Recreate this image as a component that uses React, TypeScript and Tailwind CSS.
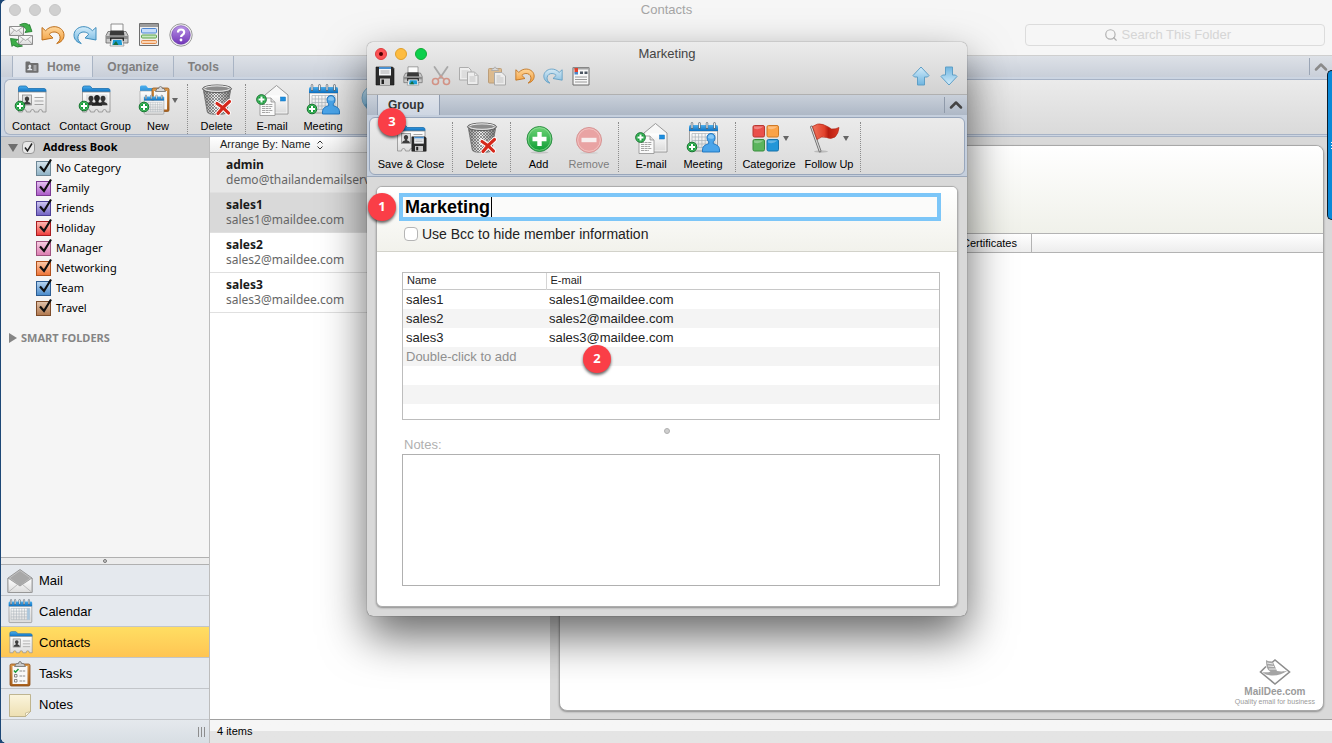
import type { ReactNode } from 'react';
import { ChevronUp, Search } from 'lucide-react';
import clsx from 'clsx';

const categories = [
  { name: 'No Category', box: 'border-[#6d8796] from-[#d5e4ec] to-[#8fb3c6]' },
  { name: 'Family', box: 'border-[#7c3a94] from-[#e4c0ef] to-[#ac5cc8]' },
  { name: 'Friends', box: 'border-[#4d3f96] from-[#cdc5ee] to-[#7565c4]' },
  { name: 'Holiday', box: 'border-[#a81c20] from-[#fbb5b0] to-[#ee3b3d]' },
  { name: 'Manager', box: 'border-[#a0547f] from-[#f6cde2] to-[#dc7fb2]' },
  { name: 'Networking', box: 'border-[#b0501c] from-[#fbc8a5] to-[#ee7536]' },
  { name: 'Team', box: 'border-[#2c5c92] from-[#b5d3ef] to-[#4a8ccb]' },
  { name: 'Travel', box: 'border-[#7d4c2a] from-[#dfc1a8] to-[#b27a50]' },
];

const contacts = [
  { name: 'admin', email: 'demo@thailandemailserver.com', row: 'bg-[#e7e7e7]' },
  { name: 'sales1', email: 'sales1@maildee.com', row: 'bg-[#d9d9d9]' },
  { name: 'sales2', email: 'sales2@maildee.com', row: 'bg-white' },
  { name: 'sales3', email: 'sales3@maildee.com', row: 'bg-white' },
];

const members = contacts.slice(1);

/* ---------- icons ---------- */

function Defs() {
  return (
    <svg className="absolute h-0 w-0" aria-hidden="true">
      <defs>
        <linearGradient id="blue" x1="0" y1="0" x2="0" y2="1">
          <stop offset="0" stopColor="#4db0ee" />
          <stop offset="1" stopColor="#0b6fc0" />
        </linearGradient>
        <linearGradient id="sky" x1="0" y1="0" x2="0" y2="1">
          <stop offset="0" stopColor="#d3ecfa" />
          <stop offset="1" stopColor="#6fb5e0" />
        </linearGradient>
        <linearGradient id="paper" x1="0" y1="0" x2="0" y2="1">
          <stop offset="0" stopColor="#ffffff" />
          <stop offset="1" stopColor="#dcdcdc" />
        </linearGradient>
        <linearGradient id="steel" x1="0" y1="0" x2="1" y2="0">
          <stop offset="0" stopColor="#8a8a8a" />
          <stop offset="0.45" stopColor="#f4f4f4" />
          <stop offset="1" stopColor="#7c7c7c" />
        </linearGradient>
        <linearGradient id="green" x1="0" y1="0" x2="0" y2="1">
          <stop offset="0" stopColor="#6fd477" />
          <stop offset="1" stopColor="#0c9c33" />
        </linearGradient>
        <linearGradient id="red" x1="0" y1="0" x2="1" y2="0">
          <stop offset="0" stopColor="#f0755e" />
          <stop offset="0.45" stopColor="#e2412b" />
          <stop offset="0.6" stopColor="#b81d10" />
          <stop offset="1" stopColor="#dc3823" />
        </linearGradient>
        <linearGradient id="orange" x1="0" y1="0" x2="0" y2="1">
          <stop offset="0" stopColor="#ffd79c" />
          <stop offset="1" stopColor="#f19a35" />
        </linearGradient>
        <linearGradient id="wood" x1="0" y1="0" x2="0" y2="1">
          <stop offset="0" stopColor="#dc9a4c" />
          <stop offset="1" stopColor="#a85f1c" />
        </linearGradient>
        <linearGradient id="purple" x1="0" y1="0" x2="0" y2="1">
          <stop offset="0" stopColor="#b994e6" />
          <stop offset="1" stopColor="#7235b8" />
        </linearGradient>
        <linearGradient id="note" x1="0" y1="0" x2="0" y2="1">
          <stop offset="0" stopColor="#fbf5dd" />
          <stop offset="1" stopColor="#eddfb2" />
        </linearGradient>
        <pattern id="mesh" width="3" height="3" patternUnits="userSpaceOnUse">
          <path d="M0 0l3 3M3 0l-3 3" stroke="#555" strokeWidth="0.6" />
        </pattern>
      </defs>
    </svg>
  );
}

function Svg({ box = 32, className = 'size-8', children }: { box?: number; className?: string; children: ReactNode }) {
  return (
    <svg viewBox={`0 0 ${box} ${box}`} className={clsx('shrink-0 overflow-visible', className)} fill="none" aria-hidden="true">
      {children}
    </svg>
  );
}

function PlusBadge({ x, y }: { x: number; y: number }) {
  return (
    <g>
      <circle cx={x} cy={y} r="4.8" fill="#129a38" stroke="#0a6a24" />
      <circle cx={x} cy={y} r="4" stroke="#6bcf7f" strokeWidth="0.6" />
      <path d={`M${x - 3} ${y}h6M${x} ${y - 3}v6`} stroke="#fff" strokeWidth="2" />
    </g>
  );
}

function Bust({ x, y, s = 1, fill = '#3c3c3c' }: { x: number; y: number; s?: number; fill?: string }) {
  return (
    <path
      transform={`translate(${x} ${y}) scale(${s})`}
      d="M0-5c1.500 0 2.400 1.100 2.400 2.600 0 1-.5 1.900-1.100 2.400v1c1.500.5 3 .8 3 3H-4.300c0-2.200 1.500-2.500 3-3V0C-1.900-.5-2.400-1.400-2.400-2.400-2.400-3.900-1.500-5 0-5z"
      fill={fill}
    />
  );
}

function CardBody() {
  return (
    <g>
      <path d="M3.500 8V4Q3.500 2 5.500 2h5q1 0 1.600 1l1 1.500H29q2 0 2 2V8z" fill="url(#blue)" stroke="#1b6fae" strokeWidth="0.8" />
      <path d="M3.500 8h27.500v20h-3.500q0-2.500-2-2.500t-2 2.500h-4q0-2.500-2-2.500t-2 2.500h-4q0-2.500-2-2.500t-2 2.500H3.500z" fill="url(#paper)" stroke="#8e8e8e" strokeWidth="0.8" />
    </g>
  );
}

function ContactIcon({ badge = true, className }: { badge?: boolean; className?: string }) {
  return (
    <Svg className={className}>
      <CardBody />
      <rect x="7.500" y="11" width="9" height="10" fill="#dedede" stroke="#8a8a8a" strokeWidth="0.8" />
      <Bust x={12} y={17} s={0.9} />
      <path d="M19.500 13.500h9M19.500 17h9M19.500 20.500h9" stroke="#a5a5a5" />
      {badge && <PlusBadge x={5} y={22} />}
    </Svg>
  );
}

function GroupIcon() {
  return (
    <Svg>
      <CardBody />
      <rect x="7" y="10.500" width="21.500" height="11.500" fill="#e2e2e2" />
      <Bust x={12} y={17} s={1.050} fill="#333" />
      <Bust x={24} y={17} s={1.050} fill="#333" />
      <Bust x={18} y={17} s={1.200} fill="#222" />
      <PlusBadge x={5} y={22} />
    </Svg>
  );
}

function CalendarArt({ rings = [5, 12.500, 20, 27.500] }: { rings?: number[] }) {
  return (
    <g>
      <path d="M2.500 9h28v19q0 1-1 1h-26q-1 0-1-1z" fill="url(#paper)" stroke="#8a8a8a" strokeWidth="0.8" />
      <path d="M2 4.500Q2 3 3.500 3h26Q31 3 31 4.500V9H2z" fill="url(#blue)" />
      <path d="M5 11.500h23v14H5zM5 15h23M5 18.500h23M5 22h23M8.300 11.500v14M11.600 11.500v14M14.900 11.500v14M18.200 11.500v14M21.500 11.500v14M24.800 11.500v14" stroke="#a9b1b8" strokeWidth="0.7" />
      {rings.map((x) => (
        <g key={x}>
          <path d={`M${x} 1.500v4.500`} stroke="#5f6b75" strokeWidth="2.400" strokeLinecap="round" />
          <path d={`M${x} 1.500v4`} stroke="#eef3f7" strokeWidth="1.100" strokeLinecap="round" />
        </g>
      ))}
    </g>
  );
}

function NewIcon() {
  return (
    <Svg>
      <path d="M1 5V3q0-1.500 1.500-1.500H7L9 4h7v10H1z" fill="url(#blue)" />
      <path d="M1 7h15v14H1z" fill="url(#paper)" stroke="#999" strokeWidth="0.6" />
      <rect x="13" y="4" width="17" height="23.500" rx="1.500" fill="url(#wood)" stroke="#93571c" strokeWidth="0.8" />
      <rect x="15" y="7" width="13" height="18.500" fill="#f6f6f6" />
      <path d="M16.500 7.500l1.500-3h1.600q.4-2 1.900-2t1.900 2H25l1.500 3z" fill="#d8d8d8" stroke="#6c6c6c" strokeWidth="0.8" />
      <g transform="translate(3.500 10.500) scale(.7 .68)">
        <CalendarArt />
      </g>
      <PlusBadge x={5} y={23} />
    </Svg>
  );
}

function TrashIcon() {
  return (
    <Svg>
      <path d="M2 5l4 23.500Q7 31 16 31t10-2.500L30 5z" fill="url(#steel)" />
      <path d="M2.500 7l3.800 21q1 2.500 9.700 2.500t9.700-2.500L29.500 7z" fill="url(#mesh)" stroke="#6b6b6b" strokeWidth="0.6" />
      <ellipse cx="16" cy="4.800" rx="14.500" ry="3.800" fill="#a5a5a5" stroke="#5e5e5e" strokeWidth="1" />
      <ellipse cx="16" cy="4.600" rx="13" ry="2.700" fill="#8c8c8c" stroke="#ededed" strokeWidth="1" />
      <path d="M16 19.500q6.500 4 11.500 9.500M28.500 17.500q-6 5-11.500 12" stroke="#fff" strokeWidth="5" strokeLinecap="round" />
      <path d="M16 19.500q6.500 4 11.500 9.500M28.500 17.500q-6 5-11.500 12" stroke="#d5281b" strokeWidth="3.200" strokeLinecap="round" />
    </Svg>
  );
}

function EmailIcon() {
  return (
    <Svg>
      <path d="M9 11L20.500 1.500 32 11v19H9z" fill="#f7f7f7" stroke="#8e8e8e" strokeWidth="0.9" />
      <path d="M11 11.500h19.500v17H11z" fill="url(#paper)" />
      <rect x="24.500" y="13" width="5" height="4" fill="#1e8fe0" stroke="#1372bb" strokeWidth="0.5" />
      <path d="M4 14h11l4 4v13.500H4z" fill="#fafafa" stroke="#8f8f8f" strokeWidth="0.8" />
      <path d="M15 14v4h4" fill="#ddd" stroke="#8f8f8f" strokeWidth="0.8" />
      <path d="M6 20.500h11M6 22.500h11M6 24.500h9M6 26.500h11M6 28.500h8" stroke="#9b9b9b" strokeWidth="0.9" strokeDasharray="3 .6" />
      <PlusBadge x={5.500} y={15.500} />
    </Svg>
  );
}

function MeetingIcon() {
  return (
    <Svg>
      <CalendarArt />
      <path d="M24 11.500c2.600 0 4 1.800 4 4.300 0 1.700-.7 3.200-1.700 4v1.800c2.800 1.200 6.200 1.900 6.200 6.400V30H15.500v-2c0-4.500 3.400-5.200 6.200-6.400v-1.800c-1-.8-1.700-2.300-1.700-4 0-2.500 1.400-4.300 4-4.300z" fill="#4ba5ea" stroke="#1a72bd" strokeWidth="0.9" />
      <path d="M24 12.500c1.800 0 3 1.200 3 3.300 0 .6-3 1.700-6 .3 0-2.300 1.200-3.600 3-3.600z" fill="#86c8f6" />
      <PlusBadge x={5} y={25} />
    </Svg>
  );
}

function ShareIcon() {
  return (
    <Svg>
      <circle cx="16" cy="14" r="12" fill="url(#sky)" stroke="#7fb3d2" />
      <path d="M8 20q4 8 14 8" stroke="#6faad0" strokeWidth="4" />
    </Svg>
  );
}

function FloppyArt() {
  return (
    <g>
      <path d="M1 1h16.500L19 2.500V19H1z" fill="#2b2b2b" stroke="#111" strokeWidth="0.6" />
      <path d="M4 1h12v8.500H4z" fill="#f4f6f8" />
      <path d="M4 1h12v2H4z" fill="#4a90d0" />
      <path d="M5.500 5h9M5.500 7h9" stroke="#9a9a9a" strokeWidth="0.8" />
      <path d="M5 12.500h10V19H5z" fill="#c9c9c9" />
      <path d="M6.500 13.500h2.500v4.500H6.500z" fill="#222" />
    </g>
  );
}

function SaveCloseIcon() {
  return (
    <Svg>
      <g transform="translate(-1 1)">
        <CardBody />
        <rect x="7.500" y="10.500" width="9" height="10" fill="#dedede" stroke="#8a8a8a" strokeWidth="0.8" />
        <Bust x={12} y={16.500} s={0.9} />
        <path d="M19.500 11.500h9" stroke="#a5a5a5" />
      </g>
      <g transform="translate(16 14) scale(.8)">
        <FloppyArt />
      </g>
    </Svg>
  );
}

function AddIcon() {
  return (
    <Svg>
      <ellipse cx="16.500" cy="30.500" rx="9" ry="1.200" fill="#c4c4c4" />
      <circle cx="16.500" cy="17" r="12.500" fill="url(#green)" stroke="#2e8f45" />
      <circle cx="16.500" cy="17" r="11.300" stroke="#a4e2a9" strokeOpacity="0.6" />
      <path d="M16.500 10v14M9.500 17h14" stroke="#fff" strokeWidth="4.400" />
    </Svg>
  );
}

function RemoveIcon() {
  return (
    <Svg>
      <ellipse cx="16" cy="31" rx="9" ry="1" fill="#d2d2d2" />
      <circle cx="16" cy="18" r="12.500" fill="#e9a3a3" stroke="#d69494" />
      <circle cx="16" cy="18" r="11.300" stroke="#f3c2c0" />
      <path d="M8.500 18h15" stroke="#f7eeee" strokeWidth="4.400" />
    </Svg>
  );
}

function CategorizeIcon() {
  return (
    <Svg>
      <rect x="3" y="3.500" width="11.500" height="11.500" rx="1.500" fill="#ea504b" stroke="#b83833" />
      <rect x="17" y="3.500" width="11.500" height="11.500" rx="1.500" fill="#fba348" stroke="#cf7a26" />
      <rect x="3" y="17.500" width="11.500" height="11.500" rx="1.500" fill="#5bb55d" stroke="#3a8c3c" />
      <rect x="17" y="17.500" width="11.500" height="11.500" rx="1.500" fill="#2196d8" stroke="#1672aa" />
      <path d="M4 6.500q5 2 9.500-2H4zM18 6.500q5 2 9.500-2H18zM4 20.500q5 2 9.500-2H4zM18 20.500q5 2 9.500-2H18z" fill="#fff" fillOpacity="0.3" />
    </Svg>
  );
}

function FlagIcon() {
  return (
    <Svg>
      <ellipse cx="11" cy="29.500" rx="7" ry="1.200" fill="#bbb" />
      <path d="M1.500 5l8.500 24" stroke="#6c6c6c" strokeWidth="2.800" strokeLinecap="round" />
      <path d="M1.500 5l8.500 24" stroke="#d9d9d9" strokeWidth="1.100" strokeLinecap="round" />
      <path d="M2.500 4.500Q8 .5 13 2.500t8.500 4.500q3.500.5 7.500-1.500-.5 6-4 9.500-4 2.500-8.500.5-5-2-9.500 2z" fill="url(#red)" stroke="#b02a1a" strokeWidth="0.7" />
    </Svg>
  );
}

function FloppyIcon() {
  return (
    <Svg box={20} className="size-5">
      <FloppyArt />
    </Svg>
  );
}

function PrinterIcon({ className }: { className: string }) {
  return (
    <Svg box={24} className={className}>
      <path d="M6 1h12v9H6z" fill="#fbfbfb" stroke="#777" strokeWidth="0.8" />
      <path d="M3 8.500h3V11h12V8.500h3l2 4V20H1v-7.500z" fill="#c9c9c9" stroke="#666" strokeWidth="0.8" />
      <path d="M5.500 7.500h13l1 5h-15z" fill="#3a3a3a" />
      <path d="M1 13h22v3H1z" fill="#8d8d8d" />
      <path d="M5 14.500h14V18H5z" fill="#222" />
      <path d="M6.500 16h11l1.500 7H5z" fill="#f4f4f4" stroke="#777" strokeWidth="0.6" />
      <path d="M8 17h8.500l.7 5H7.300z" fill="#1b9bd4" />
      <path d="M8 22l3-4 2.500 4z" fill="#17703d" />
    </Svg>
  );
}

function UndoIcon({ flip = false, className }: { flip?: boolean; className: string }) {
  return (
    <Svg box={24} className={className}>
      <path
        transform={flip ? 'matrix(-1 0 0 1 24 0)' : undefined}
        d="M1 4.500l3.600 3.200C7.500 4.400 11 3.500 14.200 3.700c5.200.4 8.800 4 8.800 8.500 0 4-2.800 7.300-7.300 8.300 2.600-1.900 3.800-4.300 3.300-7-.6-3.200-3.300-4.700-6-4.500-2 .1-3.600.9-4.800 2.300l3.800 3.700L1 17z"
        fill={flip ? 'url(#sky)' : 'url(#orange)'}
        stroke={flip ? '#3e8dbd' : '#bd6f1c'}
      />
    </Svg>
  );
}

function SendReceiveIcon() {
  return (
    <Svg box={24} className="size-6">
      <path d="M.5 3.500h14v9H.5z" fill="url(#paper)" stroke="#8d8d8d" />
      <path d="M.5 3.500l7 5 7-5M.5 12.500l5-5.500M14.500 12.500l-5-5.500" stroke="#9c9c9c" strokeWidth="0.8" />
      <path d="M9.500 12.500h14v9h-14z" fill="url(#paper)" stroke="#8d8d8d" />
      <path d="M9.500 12.500l7 5 7-5M9.500 21.500l5-5.500M23.500 21.500l-5-5.500" stroke="#9c9c9c" strokeWidth="0.8" />
      <path d="M10.500 2Q16-1.500 20.500 2.500V1.500L23 8.500 16 9.500l1.500-2.500Q15.500 2.500 10.500 2z" fill="#3eae49" stroke="#1e7a2b" strokeWidth="0.8" />
      <path d="M13.500 23q-5.500 2.500-9.500-1l-1 1.500-1.500-8 7.500 1-2 2q2 4 6.500 4.500z" fill="#3eae49" stroke="#1e7a2b" strokeWidth="0.8" />
    </Svg>
  );
}

function ListViewIcon() {
  return (
    <Svg box={24} className="size-6">
      <path d="M2.500.5h19v22h-19z" fill="#efefef" stroke="#6e6e6e" />
      <path d="M3 1h18v3H3z" fill="#9c9c9c" />
      <rect x="4.500" y="5.500" width="15" height="4.500" rx="1" fill="#c6ddfa" stroke="#4d86d2" />
      <rect x="4.500" y="12" width="15" height="3" rx="1" fill="#c9e8c0" stroke="#5aa34a" />
      <rect x="4.500" y="17.500" width="15" height="3" rx="1" fill="#fbd3b2" stroke="#e08a4a" />
    </Svg>
  );
}

function HelpIcon() {
  return (
    <Svg box={24} className="size-6">
      <circle cx="12" cy="12" r="11.200" fill="#f4f4f4" stroke="#9a9a9a" />
      <circle cx="12" cy="12" r="9.300" fill="url(#purple)" stroke="#6a3aa6" strokeWidth="0.6" />
      <path d="M9 9.500q0-3 3.100-3t3.100 2.700q0 1.500-1.600 2.500t-1.500 2.300" stroke="#fff" strokeWidth="2.200" />
      <circle cx="12" cy="17" r="1.400" fill="#fff" />
    </Svg>
  );
}

function CutIcon() {
  return (
    <Svg box={20} className="size-5 opacity-60">
      <path d="M3.500 1l7.500 11M16.500 1L9 12" stroke="#858585" strokeWidth="1.800" strokeLinecap="round" />
      <circle cx="4.500" cy="15.500" r="3" stroke="#d0654f" strokeWidth="1.600" />
      <circle cx="15.500" cy="15.500" r="3" stroke="#d0654f" strokeWidth="1.600" />
      <path d="M7 13.500l3-3.500 3 3.500" stroke="#c9705d" strokeWidth="1.600" />
    </Svg>
  );
}

function CopyIcon() {
  return (
    <Svg box={20} className="size-5 opacity-60">
      <path d="M.5 1.500h9L12 4v10H.5z" fill="#fafafa" stroke="#8c8c8c" />
      <path d="M2.500 5h7M2.500 7h7M2.500 9h7M2.500 11h7" stroke="#b5b5b5" strokeWidth="0.8" />
      <path d="M8.500 6h7l3.500 3.500V18.500H8.500z" fill="#fafafa" stroke="#8c8c8c" />
      <path d="M15.500 6v3.500H19M10.500 11h6M10.500 13h6M10.500 15h6" stroke="#a5a5a5" strokeWidth="0.8" />
    </Svg>
  );
}

function PasteIcon() {
  return (
    <Svg box={20} className="size-5 opacity-60">
      <rect x="1.500" y="2.500" width="13" height="14.500" rx="1" fill="#dca55c" stroke="#a8763a" />
      <path d="M4.500 4.500l1-2H7q0-1.500 1-1.500t1 1.500h1.500l1 2z" fill="#d9d9d9" stroke="#808080" strokeWidth="0.8" />
      <path d="M7.500 6.500h7.500l3.500 3.500v9h-11z" fill="#fafafa" stroke="#8c8c8c" />
      <path d="M9.500 10h4M9.500 12h7M9.500 14h7M9.500 16h7" stroke="#a5a5a5" strokeWidth="0.8" />
    </Svg>
  );
}

function FormIcon() {
  return (
    <Svg box={20} className="size-5">
      <path d="M2 1.500h16v17.500H2z" fill="#f7f7f7" stroke="#6b6b6b" />
      <path d="M2 1.500h16v2H2z" fill="#a5a5a5" />
      <path d="M3.500 2h3.500v4.500H3.500z" fill="#e2402d" />
      <path d="M3.500 6h3.500v2.500H3.500z" fill="#4b87c9" />
      <path d="M9 5.500h3v2.500H9zM13.500 5.500h3v2.500h-3z" fill="#4c5662" />
      <path d="M4 11h12M4 13.500h12M4 16h12" stroke="#9a9a9a" />
    </Svg>
  );
}

function ArrowIcon({ down = false }: { down?: boolean }) {
  return (
    <Svg box={20} className={clsx('size-5', down && 'rotate-180')}>
      <path d="M10 1l8 8.500-1.500 1.500H13.500v8h-7v-8H3.500L2 9.500z" fill="url(#sky)" stroke="#5f9fc6" />
    </Svg>
  );
}

function MailNavIcon() {
  return (
    <Svg box={26} className="size-[26px]">
      <path d="M1 10L13 1.500 25 10v14.500H1z" fill="#c4c4c4" stroke="#888" strokeWidth="0.8" />
      <path d="M3 10L13 3l10 7-10 7.500z" fill="#a8a8a8" />
      <path d="M1 10l12 8 12-8v14.500H1z" fill="url(#paper)" stroke="#8e8e8e" strokeWidth="0.8" />
      <path d="M1.500 24l9-7.500M24.500 24l-9-7.500" stroke="#b0b0b0" strokeWidth="0.8" />
    </Svg>
  );
}

function CalendarNavIcon() {
  return (
    <Svg className="size-[26px]">
      <CalendarArt rings={[5, 10, 15.500, 21, 27]} />
      <path d="M24.800 11.500H28v14h-3.200z" fill="#a9c6dd" />
    </Svg>
  );
}

function TasksNavIcon() {
  return (
    <Svg box={26} className="size-[26px]">
      <rect x="3" y="3" width="20" height="22" rx="1.500" fill="url(#wood)" stroke="#8a4d17" strokeWidth="0.8" />
      <path d="M5.500 5h15v18h-15z" fill="#f8f8f8" />
      <path d="M7.500 5.500l2-3h2q0-2 1.500-2t1.500 2h2l2 3z" fill="#c8c8c8" stroke="#6d6d6d" strokeWidth="0.8" />
      <path d="M7 9.500l1.500 1.700L11.500 8" stroke="#1d9a3c" strokeWidth="1.500" />
      <path d="M7.500 13.500h2.500v2.500H7.500zM7.500 18.500h2.500V21H7.500z" stroke="#6d6d6d" strokeWidth="0.8" />
      <path d="M12.500 10h6M12.500 15h6M12.500 20h6" stroke="#8c8c8c" strokeDasharray="2.500 .7" />
    </Svg>
  );
}

function NotesNavIcon() {
  return (
    <Svg box={26} className="size-[26px]">
      <path d="M2.500 2.500h21v17l-5 5h-16z" fill="url(#note)" stroke="#b3a67a" strokeWidth="0.8" />
      <path d="M23.500 19.500l-5 1.500v3.500z" fill="#fdf9e8" stroke="#b3a67a" strokeWidth="0.6" />
    </Svg>
  );
}

function HomeTabIcon() {
  return (
    <Svg box={14} className="size-3.5">
      <path d="M.5 2.500Q.5 1.500 1.500 1.500h3l1.200 1.500H12.500q1 0 1 1V12q0 .8-1 .8h-11q-1 0-1-.8z" fill="#6f6f6f" />
      <Bust x={4.800} y={7.800} s={0.600} fill="#e4e7ec" />
      <path d="M8.500 6h3M8.500 8h3M8.500 10h3" stroke="#e4e7ec" strokeWidth="0.9" />
    </Svg>
  );
}

/* ---------- shared controls ---------- */

function Caret() {
  return <span className="h-0 w-0 border-x-3 border-t-5 border-x-transparent border-t-[#666]" />;
}

function RibbonButton({
  label,
  icon,
  width = 'w-[52px]',
  menu = false,
  disabled = false,
}: {
  label: string;
  icon: ReactNode;
  width?: string;
  menu?: boolean;
  disabled?: boolean;
}) {
  return (
    <button type="button" disabled={disabled} className={clsx('flex shrink-0 flex-col items-center gap-0.5 text-[11px] leading-4 whitespace-nowrap', width)}>
      <span className="flex items-center gap-px">
        {icon}
        {menu && <Caret />}
      </span>
      <span className={disabled ? 'text-[#7d7d7d]' : 'text-black'}>{label}</span>
    </button>
  );
}

function Divider() {
  return <span className="w-0 shrink-0 self-stretch border-l border-dotted border-[#8c8c8c]" />;
}

function ToolButton({ label, children }: { label: string; children: ReactNode }) {
  return (
    <button type="button" aria-label={label} className="flex shrink-0">
      {children}
    </button>
  );
}

function Step({ n, className }: { n: number; className: string }) {
  return (
    <span
      className={clsx(
        'absolute flex size-7 items-center justify-center rounded-full bg-[#fa3e47] font-["Open_Sans",sans-serif] text-[13px] font-bold text-white shadow-[0_2px_3px_rgba(0,0,0,0.6)]',
        className,
      )}
    >
      {n}
    </span>
  );
}

/* ---------- main window ---------- */

function MainHeader() {
  const tab = 'flex items-center gap-2 border-r border-[#a9b4c4]';
  return (
    <header>
      <div className="border-b border-[#cfcfcf] bg-[#f6f6f6] pb-2">
        <div className="grid h-5 grid-cols-[1fr_auto_1fr] items-center">
          <div className="flex gap-2 pl-2">
            <span className="size-3 rounded-full border border-[#c6c6c6] bg-[#d0d0d0]" />
            <span className="size-3 rounded-full border border-[#c6c6c6] bg-[#d0d0d0]" />
            <span className="size-3 rounded-full border border-[#c6c6c6] bg-[#d0d0d0]" />
          </div>
          <h1 className="text-[13px] text-[#a5a5a5]">Contacts</h1>
        </div>
        <div className="flex items-center justify-between pt-[3px] pr-[7px] pl-2">
          <div className="flex gap-2">
            <ToolButton label="Send and receive"><SendReceiveIcon /></ToolButton>
            <ToolButton label="Undo"><UndoIcon className="size-6" /></ToolButton>
            <ToolButton label="Redo"><UndoIcon flip className="size-6" /></ToolButton>
            <ToolButton label="Print"><PrinterIcon className="size-6" /></ToolButton>
            <ToolButton label="View"><ListViewIcon /></ToolButton>
            <ToolButton label="Help"><HelpIcon /></ToolButton>
          </div>
          <label className="flex h-[22px] w-[300px] items-center justify-center gap-1 rounded border border-[#dcdcdc] text-[#b0b0b0]">
            <Search className="size-3.5" strokeWidth={2} />
            <input type="text" aria-label="Search" placeholder="Search This Folder" className="w-[125px] bg-transparent text-[13px] outline-none placeholder:text-[#d5d5d5]" />
          </label>
        </div>
      </div>
      <nav className="flex h-[21px] bg-linear-to-b from-[#dde1e7] to-[#c9cfd9] pl-[11px] text-xs font-bold text-[#7f7f7f]">
        <button type="button" className={clsx(tab, 'border-l bg-linear-to-b from-[#e6e9ee] to-[#dce1e9] px-3')}>
          <HomeTabIcon />
          Home
        </button>
        <button type="button" className={clsx(tab, 'px-3.5')}>Organize</button>
        <button type="button" className={clsx(tab, 'px-3.5')}>Tools</button>
        <button type="button" aria-label="Collapse ribbon" className="my-0.5 ml-auto flex items-center border-l border-[#9aa5b5] px-px text-[#8a8a8a]">
          <ChevronUp className="size-5" strokeWidth={3} />
        </button>
      </nav>
      <div className="border-b border-[#a9b4c6] bg-[#ccd5e2] pt-0.5 pb-px pl-[3px]">
        <div className="flex rounded-l-md border-y border-l border-[#a7b3c6] bg-linear-to-b from-[#ebebeb] to-[#dadada] pt-1 text-black">
          <div className="flex pr-1">
            <RibbonButton label="Contact" icon={<ContactIcon />} />
            <RibbonButton label="Contact Group" icon={<GroupIcon />} width="w-[76px]" />
            <RibbonButton label="New" icon={<NewIcon />} width="w-[50px]" menu />
          </div>
          <Divider />
          <RibbonButton label="Delete" icon={<TrashIcon />} width="w-[57px]" />
          <Divider />
          <div className="flex">
            <RibbonButton label="E-mail" icon={<EmailIcon />} />
            <RibbonButton label="Meeting" icon={<MeetingIcon />} width="w-[50px]" />
            <RibbonButton label="IM" icon={<ShareIcon />} />
          </div>
        </div>
      </div>
    </header>
  );
}

function CheckMark() {
  return (
    <svg viewBox="0 0 18 18" className="pointer-events-none absolute -top-1 left-0 size-[18px] fill-none" aria-hidden="true">
      <path d="M4 9.500l4 4.500L15 2.500" stroke="#111" strokeWidth="2.200" />
    </svg>
  );
}

function Sidebar() {
  const nav = [
    { label: 'Mail', icon: <MailNavIcon /> },
    { label: 'Calendar', icon: <CalendarNavIcon /> },
    { label: 'Contacts', icon: <ContactIcon badge={false} className="size-[26px]" /> },
    { label: 'Tasks', icon: <TasksNavIcon /> },
    { label: 'Notes', icon: <NotesNavIcon /> },
  ];
  return (
    <aside className="flex w-[209px] shrink-0 flex-col border-r border-[#bdbdbd] bg-[#f5f5f5]">
      <div className='flex-1 font-["Noto_Sans",sans-serif] text-[11px] text-black'>
        <label className="flex h-[21px] items-center gap-2 bg-[#cbcbcb] pl-[7px] font-bold">
          <span className="border-x-5 border-t-8 border-x-transparent border-t-[#6e6e6e]" />
          <span className="relative -ml-1 flex">
            <input type="checkbox" defaultChecked className="size-[13px] appearance-none rounded-sm border border-[#999] bg-[#e8e8e8]" />
            <svg viewBox="0 0 13 13" className="pointer-events-none absolute inset-0 fill-none" aria-hidden="true">
              <path d="M3 6.500l2.500 3.500L10 2.500" stroke="#222" strokeWidth="1.500" />
            </svg>
          </span>
          Address Book
        </label>
        <ul>
          {categories.map((c) => (
            <li key={c.name}>
              <label className="flex h-5 items-center gap-[5px] pl-[35px]">
                <span className="relative flex">
                  <input type="checkbox" defaultChecked className={clsx('size-[15px] appearance-none border bg-linear-to-b', c.box)} />
                  <CheckMark />
                </span>
                {c.name}
              </label>
            </li>
          ))}
        </ul>
        <button type="button" className="mt-2.5 flex h-5 items-center gap-1 pl-2 text-[11px] font-bold text-[#858585]">
          <span className="border-y-5 border-l-8 border-y-transparent border-l-[#858585]" />
          SMART FOLDERS
        </button>
      </div>
      <div className="flex h-2 items-center justify-center border-y border-[#b0b0b0] bg-[#ececec]">
        <span className="size-1 rounded-full border border-[#777] bg-[#ccc]" />
      </div>
      <nav>
        {nav.map((n) => (
          <button
            key={n.label}
            type="button"
            className={clsx(
              'flex h-[31px] w-full items-center gap-1.5 border-b border-[#c2c5c9] pt-0.5 pl-1.5 text-[13px] text-black',
              n.label === 'Contacts' ? 'bg-linear-to-b from-[#ffde62] to-[#ffc553]' : 'bg-[#e5e9ee]',
            )}
          >
            {n.icon}
            {n.label}
          </button>
        ))}
      </nav>
      <div className="flex h-[23px] items-center justify-end gap-0.5 bg-linear-to-b from-[#e5e9ed] to-[#d8dee4] pr-1">
        <span className="h-2.5 w-px bg-[#8d8d8d]" />
        <span className="h-2.5 w-px bg-[#8d8d8d]" />
        <span className="h-2.5 w-px bg-[#8d8d8d]" />
      </div>
    </aside>
  );
}

function ContactList() {
  return (
    <section className="w-[340px] shrink-0 bg-white">
      <button type="button" className="flex h-4 w-full items-center gap-1 border-b border-[#c4c4c4] bg-linear-to-b from-white to-[#efefef] pl-2.5 text-[11px] text-[#222]">
        Arrange By: Name
        <svg viewBox="0 0 8 10" className="ml-0.5 h-2.5 w-2 fill-none stroke-[#333]" aria-hidden="true">
          <path d="M1.500 3.500L4 1l2.500 2.500M1.500 6.500L4 9l2.500-2.500" />
        </svg>
      </button>
      <ul className='font-["Noto_Sans",sans-serif] text-xs leading-[15px]'>
        {contacts.map((c) => (
          <li key={c.name}>
            <button type="button" className={clsx('flex h-10 w-full flex-col justify-center border-b border-[#e0e0e0] pb-px pl-4 text-left', c.row)}>
              <span className="font-bold text-[#1a1a1a]">{c.name}</span>
              <span className="text-[#666]">{c.email}</span>
            </button>
          </li>
        ))}
      </ul>
    </section>
  );
}

function PreviewPane() {
  return (
    <section className="flex min-w-0 flex-1 bg-[#d9d9d9] pt-2 pr-2 pb-2 pl-[9px]">
      <div className="flex flex-1 flex-col overflow-hidden rounded-lg border border-[#a8a8a8] bg-white shadow-[0_1px_2px_rgba(0,0,0,0.35)]">
        <div className="h-[87px] bg-linear-to-b from-white to-[#f0f1ea]" />
        <div className="flex h-5 border-y border-[#b3b3b3] bg-linear-to-b from-white to-[#ededed] text-[11px]">
          <button type="button" className="w-[472px] border-r border-[#b3b3b3] pr-3.5 text-right text-black">Certificates</button>
        </div>
        <div className="flex flex-1 items-end justify-end pr-2 pb-1">
          <div className="flex flex-col items-center text-[#9b9b9b]">
            <svg viewBox="0 0 34 28" className="h-7 w-[34px] fill-none" aria-hidden="true">
              <path d="M8 8.500L2.500 14 17 26l14.500-12L17 2l-3 2.500" stroke="#8d8d8d" strokeWidth="1.600" />
              <path d="M8 2c2 2 5 .5 7 2l4 9c5 1 8 0 10 0-4 3-10 5-16 4.500-4-.3-7-1.500-8.500-3.500 3 .5 6 .5 8-.5C9 12 8 8 8 2z" fill="#a5a5a5" />
              <path d="M9 5l6 1M10 8l6 .5M11 11l7 0" stroke="#fff" strokeWidth="0.8" />
            </svg>
            <p className="text-[10px] leading-3 font-bold">MailDee.com</p>
            <p className="text-[7px] leading-2">Quality email for business</p>
          </div>
        </div>
      </div>
    </section>
  );
}

/* ---------- group window ---------- */

function GroupWindow() {
  return (
    <div
      role="dialog"
      aria-label="Marketing"
      className="absolute top-[42px] left-[367px] w-[600px] rounded-md bg-[#d9d9d9] shadow-[0_20px_45px_rgba(0,0,0,0.6),0_0_1px_rgba(0,0,0,0.8)]"
    >
      <div className="rounded-t-md border-b border-[#b0b0b0] bg-linear-to-b from-[#ececec] to-[#d2d2d2] pb-2">
        <div className="grid h-6 grid-cols-[1fr_auto_1fr] items-center">
          <div className="flex gap-2 pl-2">
            <button type="button" aria-label="Close" className="flex size-3 items-center justify-center rounded-full border border-[#df3d3f] bg-[#fc5254]">
              <span className="size-1 rounded-full bg-[#4d0000]" />
            </button>
            <button type="button" aria-label="Minimize" className="size-3 rounded-full border border-[#e0a02c] bg-[#fdbc40]" />
            <button type="button" aria-label="Zoom" className="size-3 rounded-full border border-[#12ac36] bg-[#0bcf4c]" />
          </div>
          <h2 className="text-[13px] text-[#444]">Marketing</h2>
        </div>
        <div className="flex items-center justify-between px-2">
          <div className="flex gap-2">
            <ToolButton label="Save"><FloppyIcon /></ToolButton>
            <ToolButton label="Print"><PrinterIcon className="size-5" /></ToolButton>
            <ToolButton label="Cut"><CutIcon /></ToolButton>
            <ToolButton label="Copy"><CopyIcon /></ToolButton>
            <ToolButton label="Paste"><PasteIcon /></ToolButton>
            <ToolButton label="Undo"><UndoIcon className="size-5" /></ToolButton>
            <ToolButton label="Redo"><UndoIcon flip className="size-5 opacity-80" /></ToolButton>
            <ToolButton label="Form"><FormIcon /></ToolButton>
          </div>
          <div className="flex gap-2">
            <ToolButton label="Previous"><ArrowIcon /></ToolButton>
            <ToolButton label="Next"><ArrowIcon down /></ToolButton>
          </div>
        </div>
      </div>
      <nav className="flex h-5 bg-linear-to-b from-[#c9d0da] to-[#aeb8c6] pl-2.5 text-xs font-bold text-[#333]">
        <button type="button" className="border-x border-[#8f9cb0] bg-linear-to-b from-[#dfe3ea] to-[#ced6e2] pr-[15px] pl-2.5">Group</button>
        <button type="button" aria-label="Collapse ribbon" className="my-0.5 ml-auto flex items-center border-l border-[#8f9aaa] px-px text-[#444]">
          <ChevronUp className="size-5" strokeWidth={3} />
        </button>
      </nav>
      <div className="border-b border-[#9ba8bb] bg-[#c5cfdd] px-0.5 pt-0.5 pb-px">
        <div className="flex rounded-md border border-[#98a6bb] bg-linear-to-b from-[#ebebeb] to-[#dadada] pt-1 pb-0.5">
          <RibbonButton label="Save & Close" icon={<SaveCloseIcon />} width="w-[82px]" />
          <Divider />
          <RibbonButton label="Delete" icon={<TrashIcon />} width="w-[57px]" />
          <Divider />
          <div className="flex pr-1.5">
            <RibbonButton label="Add" icon={<AddIcon />} width="w-[55px]" />
            <RibbonButton label="Remove" icon={<RemoveIcon />} width="w-[46px]" disabled />
          </div>
          <Divider />
          <div className="flex px-1.5">
            <RibbonButton label="E-mail" icon={<EmailIcon />} />
            <RibbonButton label="Meeting" icon={<MeetingIcon />} />
          </div>
          <Divider />
          <div className="flex px-0.5">
            <RibbonButton label="Categorize" icon={<CategorizeIcon />} width="w-[62px]" menu />
            <RibbonButton label="Follow Up" icon={<FlagIcon />} width="w-[58px]" menu />
          </div>
          <Divider />
        </div>
      </div>
      <div className="p-[9px]">
        <div className="overflow-hidden rounded-md border border-[#adadad] bg-white shadow-[0_1px_2px_rgba(0,0,0,0.35)]">
          <div className="border-b border-[#d2d2ca] bg-linear-to-b from-white to-[#f2f2ec] pt-1.5 pr-4 pb-2 pl-[22px]">
            <div className="relative">
              <input
                type="text"
                aria-label="Group name"
                defaultValue="Marketing"
                className="block h-7 w-full border-4 border-[#7cc6f8] bg-[#fbfbfa] px-0.5 text-lg leading-5 font-bold text-black outline-none"
              />
              <span className="absolute top-1 left-[92px] h-5 w-px bg-black" />
            </div>
            <label className="mt-1 flex h-[18px] items-center gap-1 pl-[5px] text-sm text-[#222]">
              <input type="checkbox" className="size-3.5 appearance-none rounded-sm border border-[#b5b5b5] bg-white" />
              Use Bcc to hide member information
            </label>
          </div>
          <div className="px-[17px] py-5 pl-[25px]">
            <div className="border border-[#bdbdbd] text-[13px] text-[#222]">
              <table className="w-full table-fixed border-collapse text-left">
                <thead>
                  <tr className="h-4 border-b border-[#c8c8c8] text-[11px] leading-[15px]">
                    <th className="w-[143px] border-r border-[#d5d5d5] pl-1 font-normal">Name</th>
                    <th className="pl-1 font-normal">E-mail</th>
                  </tr>
                </thead>
                <tbody className="leading-[19px]">
                  {members.map((m) => (
                    <tr key={m.name} className="h-[19px] even:bg-[#f4f4f4]">
                      <td className="pl-[3px]">{m.name}</td>
                      <td className="pl-[3px]">{m.email}</td>
                    </tr>
                  ))}
                  <tr className="h-[19px] even:bg-[#f4f4f4]">
                    <td colSpan={2} className="pl-[3px] text-[#8f8f8f]">Double-click to add</td>
                  </tr>
                  <tr className="h-[19px]"><td colSpan={2} /></tr>
                  <tr className="h-[19px] bg-[#f4f4f4]"><td colSpan={2} /></tr>
                  <tr className="h-[15px]"><td colSpan={2} /></tr>
                </tbody>
              </table>
            </div>
            <div className="flex h-4 items-end justify-center pr-2 pb-0.5">
              <span className="size-1.5 rounded-full border border-[#b0b0b0] bg-[#cfcfcf]" />
            </div>
            <label htmlFor="notes" className="block h-[18px] pl-0.5 text-[13px] leading-[18px] text-[#b0b0b0]">Notes:</label>
            <textarea id="notes" className="block h-[132px] w-full resize-none border border-[#b0b0b0] bg-white p-1 text-[13px] outline-none" />
          </div>
        </div>
      </div>
      <Step n={1} className="top-[151px] left-px" />
      <Step n={2} className="top-[303px] left-[216px]" />
      <Step n={3} className="top-[66px] left-[11px]" />
    </div>
  );
}

export default function App() {
  return (
    <div className='relative min-h-screen overflow-hidden bg-[#1d4877] pl-px font-["Liberation_Sans",Arial,sans-serif]'>
      <Defs />
      <div className="flex min-h-screen flex-col overflow-hidden rounded-l-md bg-[#f6f6f6]">
        <MainHeader />
        <div className="flex flex-1">
          <Sidebar />
          <div className="flex min-w-0 flex-1 flex-col">
            <div className="flex flex-1">
              <ContactList />
              <PreviewPane />
            </div>
            <footer className="flex h-6 items-center border-t border-[#a0a0a0] bg-linear-to-b from-[#f6f6f6] from-50% to-[#e4e4e4] to-50% pl-[7px] text-[11px] text-black">
              4 items
            </footer>
          </div>
        </div>
      </div>
      <GroupWindow />
      <button type="button" aria-label="Side panel" className="absolute top-[70px] right-0 flex h-[150px] w-[5px] flex-col items-end justify-center gap-0.5 rounded-l-md border-y border-l border-[#0c1c2b] bg-[#0a8ad8]">
        <span className="h-px w-px bg-white" />
        <span className="h-px w-px bg-white" />
        <span className="h-px w-px bg-white" />
      </button>
    </div>
  );
}
